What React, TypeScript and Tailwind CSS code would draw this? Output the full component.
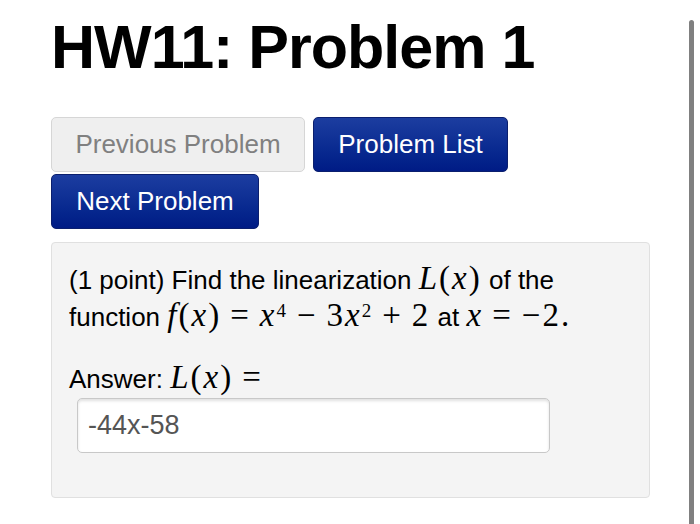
import React from "react";

const sans = { fontFamily: '"Liberation Sans", Arial, sans-serif' };

function M({ children }: { children: React.ReactNode }) {
  // math in a Times-like face, roughly MathJax sized
  return (
    <span className="font-['Liberation_Serif',serif] text-[33px] leading-[20px] tracking-[2px]">{children}</span>
  );
}

function Op({ children }: { children: React.ReactNode }) {
  return <span className="mx-[9px]">{children}</span>;
}

export default function App() {
  return (
    <div className="relative w-[700px] h-[524px] overflow-hidden bg-white" style={sans}>
      <div className="pl-[51px] pr-[51px] pt-[11px] font-['Liberation_Sans',Arial,sans-serif]">
        <h1 className="text-[61px] font-bold leading-[72px] text-black tracking-[-1px]">HW11: Problem 1</h1>

        <div className="mt-[34px] flex flex-wrap gap-x-[8px] gap-y-[2px] w-[470px]">
          <button className="h-[55px] w-[254px] rounded-[5px] border border-[#d6d6d6] bg-[#efefef] text-[26px] text-[#808080]">
            Previous Problem
          </button>
          <button className="h-[55px] w-[195px] rounded-[5px] border border-[#0b1f6e] bg-gradient-to-b from-[#1c3da0] to-[#001b85] text-[26px] text-white">
            Problem List
          </button>
          <button className="h-[55px] w-[208px] rounded-[5px] border border-[#0b1f6e] bg-gradient-to-b from-[#1c3da0] to-[#001b85] text-[26px] text-white">
            Next Problem
          </button>
        </div>

        <div className="mt-[13px] h-[256px] w-[599px] rounded-[4px] border border-[#e0e0e0] bg-[#f4f4f4] px-[17px] pt-[19px]">
          <p className="text-[26px] leading-[37px] text-black">
            (1 point) Find the linearization <M><i>L</i>(<i>x</i>)</M> of the
            <br />
            function{" "}
            <M>
              <i>f</i>(<i>x</i>)<Op>=</Op><i>x</i>
              <sup className="text-[19px]">4</sup>
              <Op>−</Op>3<i>x</i>
              <sup className="text-[19px]">2</sup>
              <Op>+</Op>2
            </M>{" "}
            at{" "}
            <M>
              <i>x</i>
              <Op>=</Op>−2.
            </M>
          </p>
          <p className="mt-[25px] text-[26px] leading-[37px] text-black">
            Answer:{" "}
            <M>
              <i>L</i>(<i>x</i>)<Op>=</Op>
            </M>
          </p>
          <div className="ml-[8px] mt-0 flex h-[55px] w-[473px] items-center rounded-[5px] border border-[#c8c8c8] bg-white px-[10px] text-[27px] text-[#555] shadow-[inset_0_2px_3px_rgba(0,0,0,0.12)]">
            -44x-58
          </div>
        </div>
      </div>

      <div className="absolute left-[689px] top-[20px] h-[510px] w-[5px] rounded-full bg-[#808080]" />
    </div>
  );
}
